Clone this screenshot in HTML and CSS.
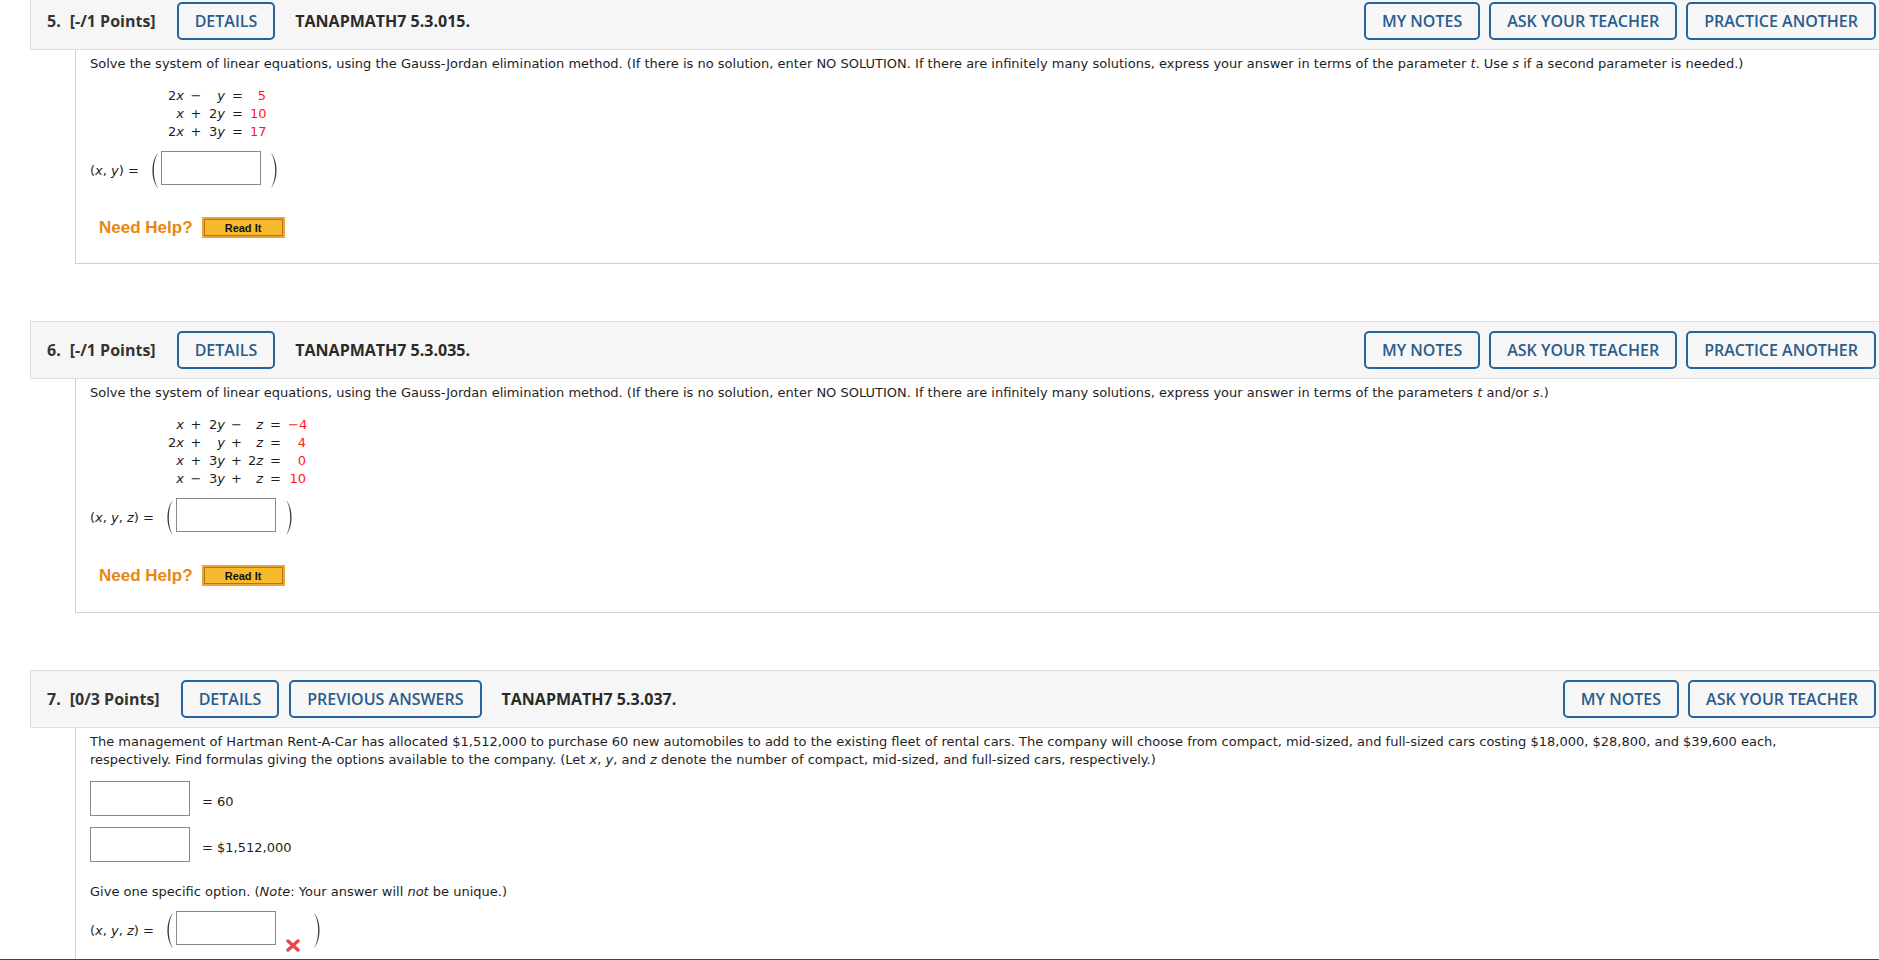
FILE: index.html
```html
<!DOCTYPE html>
<html>
<head>
<meta charset="utf-8">
<title>Questions</title>
<link rel="stylesheet" href="styles.css">
</head>
<body>
<div class="page">

  <section class="q">
    <div class="qhead">
      <span class="qnum">5.</span><span class="qpts">[-/1 Points]</span>
      <span class="btn">DETAILS</span>
      <span class="qid">TANAPMATH7 5.3.015.</span>
      <div class="qactions">
        <span class="btn">MY NOTES</span>
        <span class="btn">ASK YOUR TEACHER</span>
        <span class="btn">PRACTICE ANOTHER</span>
      </div>
    </div>
    <div class="qbody">
      <p class="prompt">Solve the system of linear equations, using the Gauss-Jordan elimination method. (If there is no solution, enter NO SOLUTION. If there are infinitely many solutions, express your answer in terms of the parameter <i>t</i>. Use <i>s</i> if a second parameter is needed.)</p>
      <div class="eqs eqs2">
        <span class="r">2<i>x</i></span><span class="c">−</span><span class="r"><i>y</i></span><span class="c">=</span><span class="r v">5</span>
        <span class="r"><i>x</i></span><span class="c">+</span><span class="r">2<i>y</i></span><span class="c">=</span><span class="r v">10</span>
        <span class="r">2<i>x</i></span><span class="c">+</span><span class="r">3<i>y</i></span><span class="c">=</span><span class="r v">17</span>
      </div>
      <div class="answer">
        <span class="lbl">(<i>x</i>, <i>y</i>) =</span>
        <svg class="paren" width="12" height="37" viewBox="0 0 12 37"><path d="M10 1 C2.6 9 2.6 28 10 36 C4.4 28 4.4 9 10 1 Z"/></svg>
        <input class="box" type="text">
        <svg class="paren pr" width="12" height="37" viewBox="0 0 12 37"><path d="M2 1 C9.4 9 9.4 28 2 36 C7.6 28 7.6 9 2 1 Z"/></svg>
      </div>
      <div class="help">
        <span class="needhelp">Need Help?</span>
        <span class="readit">Read It</span>
      </div>
    </div>
  </section>

  <section class="q q-four">
    <div class="qhead">
      <span class="qnum">6.</span><span class="qpts">[-/1 Points]</span>
      <span class="btn">DETAILS</span>
      <span class="qid">TANAPMATH7 5.3.035.</span>
      <div class="qactions">
        <span class="btn">MY NOTES</span>
        <span class="btn">ASK YOUR TEACHER</span>
        <span class="btn">PRACTICE ANOTHER</span>
      </div>
    </div>
    <div class="qbody">
      <p class="prompt">Solve the system of linear equations, using the Gauss-Jordan elimination method. (If there is no solution, enter NO SOLUTION. If there are infinitely many solutions, express your answer in terms of the parameters <i>t</i> and/or <i>s</i>.)</p>
      <div class="eqs eqs3">
        <span class="r"><i>x</i></span><span class="c">+</span><span class="r">2<i>y</i></span><span class="c">−</span><span class="r"><i>z</i></span><span class="c">=</span><span class="r v">−4</span>
        <span class="r">2<i>x</i></span><span class="c">+</span><span class="r"><i>y</i></span><span class="c">+</span><span class="r"><i>z</i></span><span class="c">=</span><span class="r v">4</span>
        <span class="r"><i>x</i></span><span class="c">+</span><span class="r">3<i>y</i></span><span class="c">+</span><span class="r">2<i>z</i></span><span class="c">=</span><span class="r v">0</span>
        <span class="r"><i>x</i></span><span class="c">−</span><span class="r">3<i>y</i></span><span class="c">+</span><span class="r"><i>z</i></span><span class="c">=</span><span class="r v">10</span>
      </div>
      <div class="answer">
        <span class="lbl">(<i>x</i>, <i>y</i>, <i>z</i>) =</span>
        <svg class="paren" width="12" height="37" viewBox="0 0 12 37"><path d="M10 1 C2.6 9 2.6 28 10 36 C4.4 28 4.4 9 10 1 Z"/></svg>
        <input class="box" type="text">
        <svg class="paren pr" width="12" height="37" viewBox="0 0 12 37"><path d="M2 1 C9.4 9 9.4 28 2 36 C7.6 28 7.6 9 2 1 Z"/></svg>
      </div>
      <div class="help">
        <span class="needhelp">Need Help?</span>
        <span class="readit">Read It</span>
      </div>
    </div>
  </section>

  <section class="q">
    <div class="qhead">
      <span class="qnum">7.</span><span class="qpts">[0/3 Points]</span>
      <span class="btn">DETAILS</span>
      <span class="btn">PREVIOUS ANSWERS</span>
      <span class="qid">TANAPMATH7 5.3.037.</span>
      <div class="qactions">
        <span class="btn">MY NOTES</span>
        <span class="btn">ASK YOUR TEACHER</span>
      </div>
    </div>
    <div class="qbody">
      <p class="prompt">The management of Hartman Rent-A-Car has allocated $1,512,000 to purchase 60 new automobiles to add to the existing fleet of rental cars. The company will choose from compact, mid-sized, and full-sized cars costing $18,000, $28,800, and $39,600 each, respectively. Find formulas giving the options available to the company. (Let <i>x</i>, <i>y</i>, and <i>z</i> denote the number of compact, mid-sized, and full-sized cars, respectively.)</p>
      <div class="fill">
        <input class="box" type="text"><span class="rhs">= 60</span>
      </div>
      <div class="fill fill-next">
        <input class="box" type="text"><span class="rhs">= $1,512,000</span>
      </div>
      <p class="prompt give">Give one specific option. (<i>Note</i>: Your answer will <i>not</i> be unique.)</p>
      <div class="answer">
        <span class="lbl">(<i>x</i>, <i>y</i>, <i>z</i>) =</span>
        <svg class="paren" width="12" height="37" viewBox="0 0 12 37"><path d="M10 1 C2.6 9 2.6 28 10 36 C4.4 28 4.4 9 10 1 Z"/></svg>
        <input class="box" type="text">
        <svg class="xmark" width="16" height="13" viewBox="0 0 16 13"><path d="M3 2 L13 11 M13 2 L3 11"/></svg>
        <svg class="paren pr px" width="12" height="37" viewBox="0 0 12 37"><path d="M2 1 C9.4 9 9.4 28 2 36 C7.6 28 7.6 9 2 1 Z"/></svg>
      </div>
      <div class="more"></div>
    </div>
  </section>

</div>
<div class="footline"></div>
</body>
</html>
```

FILE: styles.css
```css
html, body {
  margin: 0;
  padding: 0;
  overflow: hidden;
  background: #ffffff;
}

body {
  font-family: "DejaVu Sans", Verdana, sans-serif;
  font-size: 13px;
  color: #1e1e1e;
}

.page {
  margin-top: -8px;
  margin-left: 30px;
  width: 1857px;
}

.q + .q {
  margin-top: 57px;
}

/* header bar */
.qhead {
  display: flex;
  align-items: center;
  background: #f6f6f6;
  border: 1px solid #dedede;
  padding: 9px 10px 9px 16px;
  font-family: "Open Sans", sans-serif;
  font-size: 16px;
}

.qnum {
  font-weight: 700;
  color: #333;
  margin-right: 9px;
}

.qpts {
  font-weight: 700;
  color: #333;
  margin-right: 21px;
}

.btn {
  box-sizing: border-box;
  display: inline-flex;
  align-items: center;
  height: 38px;
  padding: 0 16px;
  border: 2px solid #25649e;
  border-radius: 5px;
  background: #f7f7f7;
  color: #2b5c8b;
  font-family: "Open Sans", sans-serif;
  font-size: 16px;
  font-weight: 600;
  margin-right: 10px;
  white-space: nowrap;
}

.qid {
  margin-left: 10px;
  font-weight: 700;
  color: #2a2a2a;
}

.qactions {
  margin-left: auto;
  display: flex;
  gap: 9px;
}

.qactions .btn {
  margin-right: 0;
}

/* body */
.qbody {
  margin-left: 45px;
  border-left: 1px solid #d0d0d0;
  border-bottom: 1px solid #d0d0d0;
  padding: 5px 14px 25px 14px;
}

.q-four .qbody {
  padding-bottom: 26px;
}

.prompt {
  margin: 0;
  line-height: 18px;
  max-width: 1750px;
}

.eqs {
  display: grid;
  margin: 14px 0 0 77px;
  line-height: 18px;
  white-space: nowrap;
}

.eqs2 {
  grid-template-columns: 17px 24px 17px 25px 16px;
}

.eqs3 {
  grid-template-columns: 17px 24px 17px 23px 15px 25px 18px;
}

.eqs .r { text-align: right; }
.eqs .c { text-align: center; }
.eqs .v { color: #ff1a1a; }

.answer {
  display: flex;
  align-items: flex-start;
  height: 38px;
  margin-top: 10px;
}

.lbl {
  align-self: center;
  margin-right: 9px;
  white-space: nowrap;
}

.paren {
  margin-top: 1px;
  fill: #3a3a3a;
}

.paren.pr {
  margin-left: 8px;
}

.paren.px {
  margin-left: 11px;
}

.box {
  box-sizing: border-box;
  width: 100px;
  height: 34px;
  margin: 0 0 0 1px;
  padding: 0;
  border: 1px solid #8a8a8a;
  background: #fff;
  outline: none;
}

.xmark {
  align-self: flex-end;
  margin-left: 9px;
  margin-bottom: -3px;
  fill: none;
  stroke: #e5484b;
  stroke-width: 3.4;
  stroke-linecap: round;
}

.help {
  display: flex;
  align-items: center;
  height: 21px;
  margin-top: 28px;
  margin-left: 9px;
}

.q-four .help {
  margin-top: 29px;
}

.needhelp {
  font-family: "Liberation Sans", Arial, sans-serif;
  font-weight: bold;
  font-size: 17px;
  color: #e8870e;
}

.readit {
  box-sizing: border-box;
  margin-left: 9px;
  width: 83px;
  height: 21px;
  display: inline-flex;
  align-items: center;
  justify-content: center;
  border: 2px solid #eea33a;
  box-shadow: inset 0 0 0 1px #b27711;
  background: #f6ba2d;
  font-family: "Liberation Sans", Arial, sans-serif;
  font-weight: bold;
  font-size: 11px;
  color: #111;
}

.fill {
  display: flex;
  align-items: center;
  margin-top: 12px;
}

.fill.fill-next {
  margin-top: 11px;
}

.fill .box {
  margin-left: 0;
  height: 35px;
}

.rhs {
  margin-left: 12px;
  padding-top: 5px;
}

.give {
  margin-top: 21px;
}

.more {
  height: 40px;
}

.footline {
  position: fixed;
  left: 0;
  right: 0;
  bottom: 0;
  height: 1px;
  background: #444;
}
```
